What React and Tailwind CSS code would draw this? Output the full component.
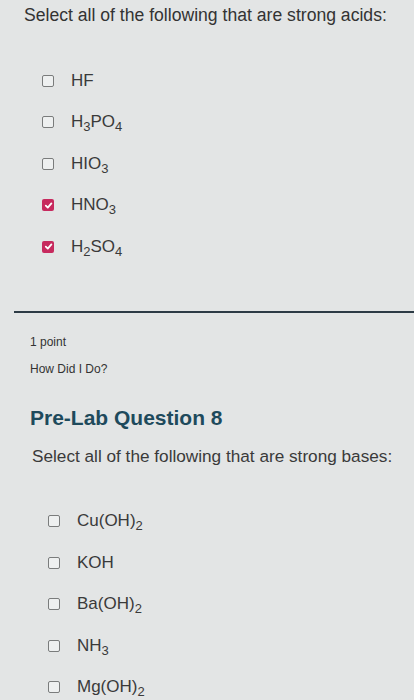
const acids = [
  { id: 'hf', label: ['HF'], checked: false },
  { id: 'h3po4', label: ['H', ['3'], 'PO', ['4']], checked: false },
  { id: 'hio3', label: ['HIO', ['3']], checked: false },
  { id: 'hno3', label: ['HNO', ['3']], checked: true },
  { id: 'h2so4', label: ['H', ['2'], 'SO', ['4']], checked: true },
];

const bases = [
  { id: 'cuoh2', label: ['Cu(OH)', ['2']], checked: false },
  { id: 'koh', label: ['KOH'], checked: false },
  { id: 'baoh2', label: ['Ba(OH)', ['2']], checked: false },
  { id: 'nh3', label: ['NH', ['3']], checked: false },
  { id: 'mgoh2', label: ['Mg(OH)', ['2']], checked: false },
];

function Formula({ parts }) {
  return (
    <span className="text-[17px] leading-[20px] text-[#3a3a3a]">
      {parts.map((p, i) =>
        Array.isArray(p) ? (
          <sub key={i} className="text-[13px] relative top-[4px]">{p[0]}</sub>
        ) : (
          <span key={i}>{p}</span>
        )
      )}
    </span>
  );
}

function Box({ checked }) {
  if (checked) {
    return (
      <span className="w-[12px] h-[12px] rounded-[2px] bg-[#c72a5e] flex items-center justify-center">
        <svg width="9" height="9" viewBox="0 0 10 10">
          <path d="M2 5.2 L4.2 7.4 L8.2 2.6" stroke="#fff" strokeWidth="2" fill="none" strokeLinecap="round" strokeLinejoin="round" />
        </svg>
      </span>
    );
  }
  return <span className="w-[12px] h-[12px] rounded-[2px] border-[1.5px] border-[#7a7c7c] bg-[#eef0f0]" />;
}

function Options({ items, className }) {
  return (
    <ul className={className}>
      {items.map((o) => (
        <li key={o.id} className="h-[41.5px] flex items-center gap-[17px]">
          <Box checked={o.checked} />
          <Formula parts={o.label} />
        </li>
      ))}
    </ul>
  );
}

export default function App() {
  return (
    <div className="min-h-[700px] w-[414px] bg-[#e3e5e5] font-['Liberation_Sans',Arial,sans-serif] text-[#333]">
      <p className="pl-[24px] pt-[4px] text-[17.6px] leading-[22px]">
        Select all of the following that are strong acids:
      </p>

      <Options items={acids} className="mt-[34px] pl-[42px]" />

      <div className="mt-[43px] ml-[14px] h-[2px] bg-[#2d3b45]" />

      <p className="mt-[22px] pl-[30px] text-[12px] leading-[14px]">1 point</p>
      <p className="mt-[13px] pl-[30px] text-[12px] leading-[14px]">How Did I Do?</p>

      <h2 className="mt-[30px] pl-[30px] text-[21px] leading-[24px] font-bold text-[#1e4a5c]">
        Pre-Lab Question 8
      </h2>
      <p className="mt-[15px] pl-[32px] text-[17.2px] leading-[22px] text-[#3a3a3a]">
        Select all of the following that are strong bases:
      </p>

      <Options items={bases} className="mt-[34px] pl-[48px]" />
    </div>
  );
}
